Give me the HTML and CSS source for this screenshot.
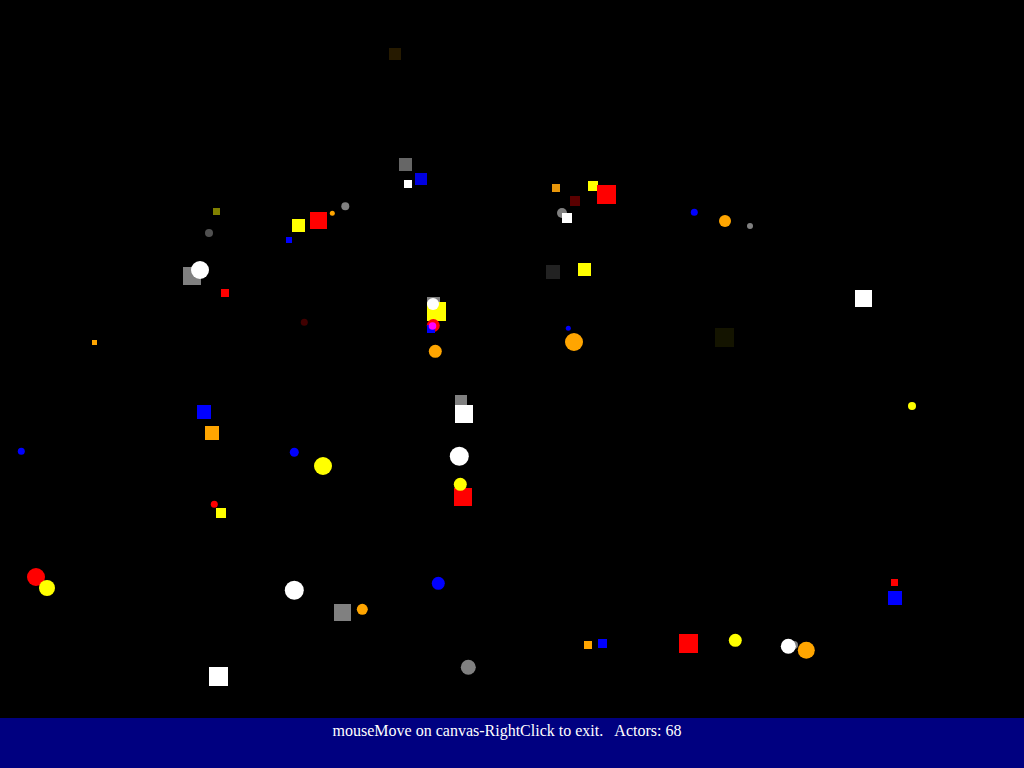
FILE: index.html
```html
<!DOCTYPE html>
<html>
<head>
<meta charset="utf-8">
<title>Actors</title>
<link rel="stylesheet" href="styles.css">
</head>
<body>
<div class="stage">
  <svg class="canvas" width="1024" height="718" viewBox="0 0 1024 718" xmlns="http://www.w3.org/2000/svg">
    <rect x="389" y="48" width="12" height="12" fill="#261a00"/>
    <rect x="399" y="158" width="13" height="13" fill="#666666"/>
    <rect x="415" y="173" width="12" height="12" fill="#0000e0"/>
    <rect x="404" y="180" width="8" height="8" fill="#ffffff"/>
    <rect x="552" y="184" width="8" height="8" fill="#e8960a"/>
    <rect x="588" y="181" width="10" height="10" fill="#ffff00"/>
    <rect x="597" y="185" width="19" height="19" fill="#ff0000"/>
    <rect x="570" y="196" width="10" height="10" fill="#5a0000"/>
    <circle cx="562" cy="213" r="5" fill="#808080"/>
    <rect x="562" y="213" width="10" height="10" fill="#ffffff"/>
    <rect x="213" y="208" width="7" height="7" fill="#808000"/>
    <circle cx="209" cy="233" r="4" fill="#505050"/>
    <rect x="292" y="219" width="13" height="13" fill="#ffff00"/>
    <rect x="310" y="212" width="17" height="17" fill="#ff0000"/>
    <circle cx="332.3" cy="213.3" r="2.5" fill="#ffa500"/>
    <rect x="286" y="237" width="6" height="6" fill="#0000ff"/>
    <circle cx="345.3" cy="206.3" r="4" fill="#808080"/>
    <circle cx="694.3" cy="212.3" r="3.5" fill="#0000ff"/>
    <circle cx="725" cy="221" r="6" fill="#ffa500"/>
    <circle cx="750" cy="226" r="3" fill="#808080"/>
    <rect x="183" y="267" width="18" height="18" fill="#808080"/>
    <circle cx="200" cy="270" r="9" fill="#ffffff"/>
    <rect x="221" y="289" width="8" height="8" fill="#ff0000"/>
    <circle cx="304.3" cy="322.3" r="3.5" fill="#400000"/>
    <rect x="92" y="340" width="5" height="5" fill="#ffa500"/>
    <rect x="197" y="405" width="14" height="14" fill="#0000ff"/>
    <rect x="205" y="426" width="14" height="14" fill="#ffa500"/>
    <circle cx="21.3" cy="451.3" r="3.5" fill="#0000ff"/>
    <circle cx="294.3" cy="452.3" r="4.5" fill="#0000ff"/>
    <circle cx="323" cy="466" r="9" fill="#ffff00"/>
    <rect x="546" y="265" width="14" height="14" fill="#222222"/>
    <rect x="578" y="263" width="13" height="13" fill="#ffff00"/>
    <rect x="427" y="297" width="13" height="13" fill="#808080"/>
    <rect x="427" y="302" width="19" height="19" fill="#ffff00"/>
    <circle cx="433" cy="304" r="6" fill="#ffffff"/>
    <circle cx="433.3" cy="325.5" r="6.5" fill="#ff0000"/>
    <rect x="427" y="325" width="8" height="8" fill="#0000ff"/>
    <circle cx="432.5" cy="326" r="3.8" fill="#ff00ff"/>
    <circle cx="435.3" cy="351.3" r="6.5" fill="#ffa500"/>
    <circle cx="568.3" cy="328.3" r="2.5" fill="#0000ff"/>
    <circle cx="574" cy="342" r="9" fill="#ffa500"/>
    <rect x="455" y="395" width="12" height="12" fill="#808080"/>
    <rect x="455" y="405" width="18" height="18" fill="#ffffff"/>
    <circle cx="459.3" cy="456.3" r="9.5" fill="#ffffff"/>
    <rect x="454" y="488" width="18" height="18" fill="#ff0000"/>
    <circle cx="460.3" cy="484.3" r="6.5" fill="#ffff00"/>
    <rect x="855" y="290" width="17" height="17" fill="#ffffff"/>
    <rect x="715" y="328" width="19" height="19" fill="#141400"/>
    <circle cx="912" cy="406" r="4" fill="#ffff00"/>
    <circle cx="214.3" cy="504.3" r="3.5" fill="#ff0000"/>
    <rect x="216" y="508" width="10" height="10" fill="#ffff00"/>
    <circle cx="36" cy="577" r="9" fill="#ff0000"/>
    <circle cx="47" cy="588" r="8" fill="#ffff00"/>
    <circle cx="294.3" cy="590.3" r="9.5" fill="#ffffff"/>
    <rect x="334" y="604" width="17" height="17" fill="#808080"/>
    <rect x="209" y="667" width="19" height="19" fill="#ffffff"/>
    <circle cx="438.3" cy="583.3" r="6.5" fill="#0000ff"/>
    <circle cx="362.3" cy="609.3" r="5.5" fill="#ffa500"/>
    <rect x="584" y="641" width="8" height="8" fill="#ffa500"/>
    <rect x="598" y="639" width="9" height="9" fill="#0000ff"/>
    <circle cx="468.3" cy="667.3" r="7.5" fill="#808080"/>
    <rect x="679" y="634" width="19" height="19" fill="#ff0000"/>
    <circle cx="735.3" cy="640.3" r="6.5" fill="#ffff00"/>
    <circle cx="794" cy="645" r="4" fill="#808080"/>
    <circle cx="788.3" cy="646.3" r="7.5" fill="#ffffff"/>
    <circle cx="806.3" cy="650.3" r="8.5" fill="#ffa500"/>
    <rect x="891" y="579" width="7" height="7" fill="#ff0000"/>
    <rect x="888" y="591" width="14" height="14" fill="#0000ff"/>
  </svg>
  <div class="status">mouseMove on canvas-RightClick to exit.&nbsp;&nbsp; Actors: 68</div>
</div>
</body>
</html>
```

FILE: styles.css
```css
html, body {
  margin: 0;
  padding: 0;
  background: #000000;
  overflow: hidden;
}

.stage {
  width: 1024px;
  height: 768px;
  display: flex;
  flex-direction: column;
}

.canvas {
  display: block;
  width: 1024px;
  height: 718px;
  background: #000000;
}

.status {
  height: 50px;
  box-sizing: border-box;
  padding-top: 4px;
  padding-right: 10px;
  background: #000080;
  color: #ffffff;
  font-family: "Liberation Serif", "Times New Roman", serif;
  font-size: 16px;
  text-align: center;
}
```
